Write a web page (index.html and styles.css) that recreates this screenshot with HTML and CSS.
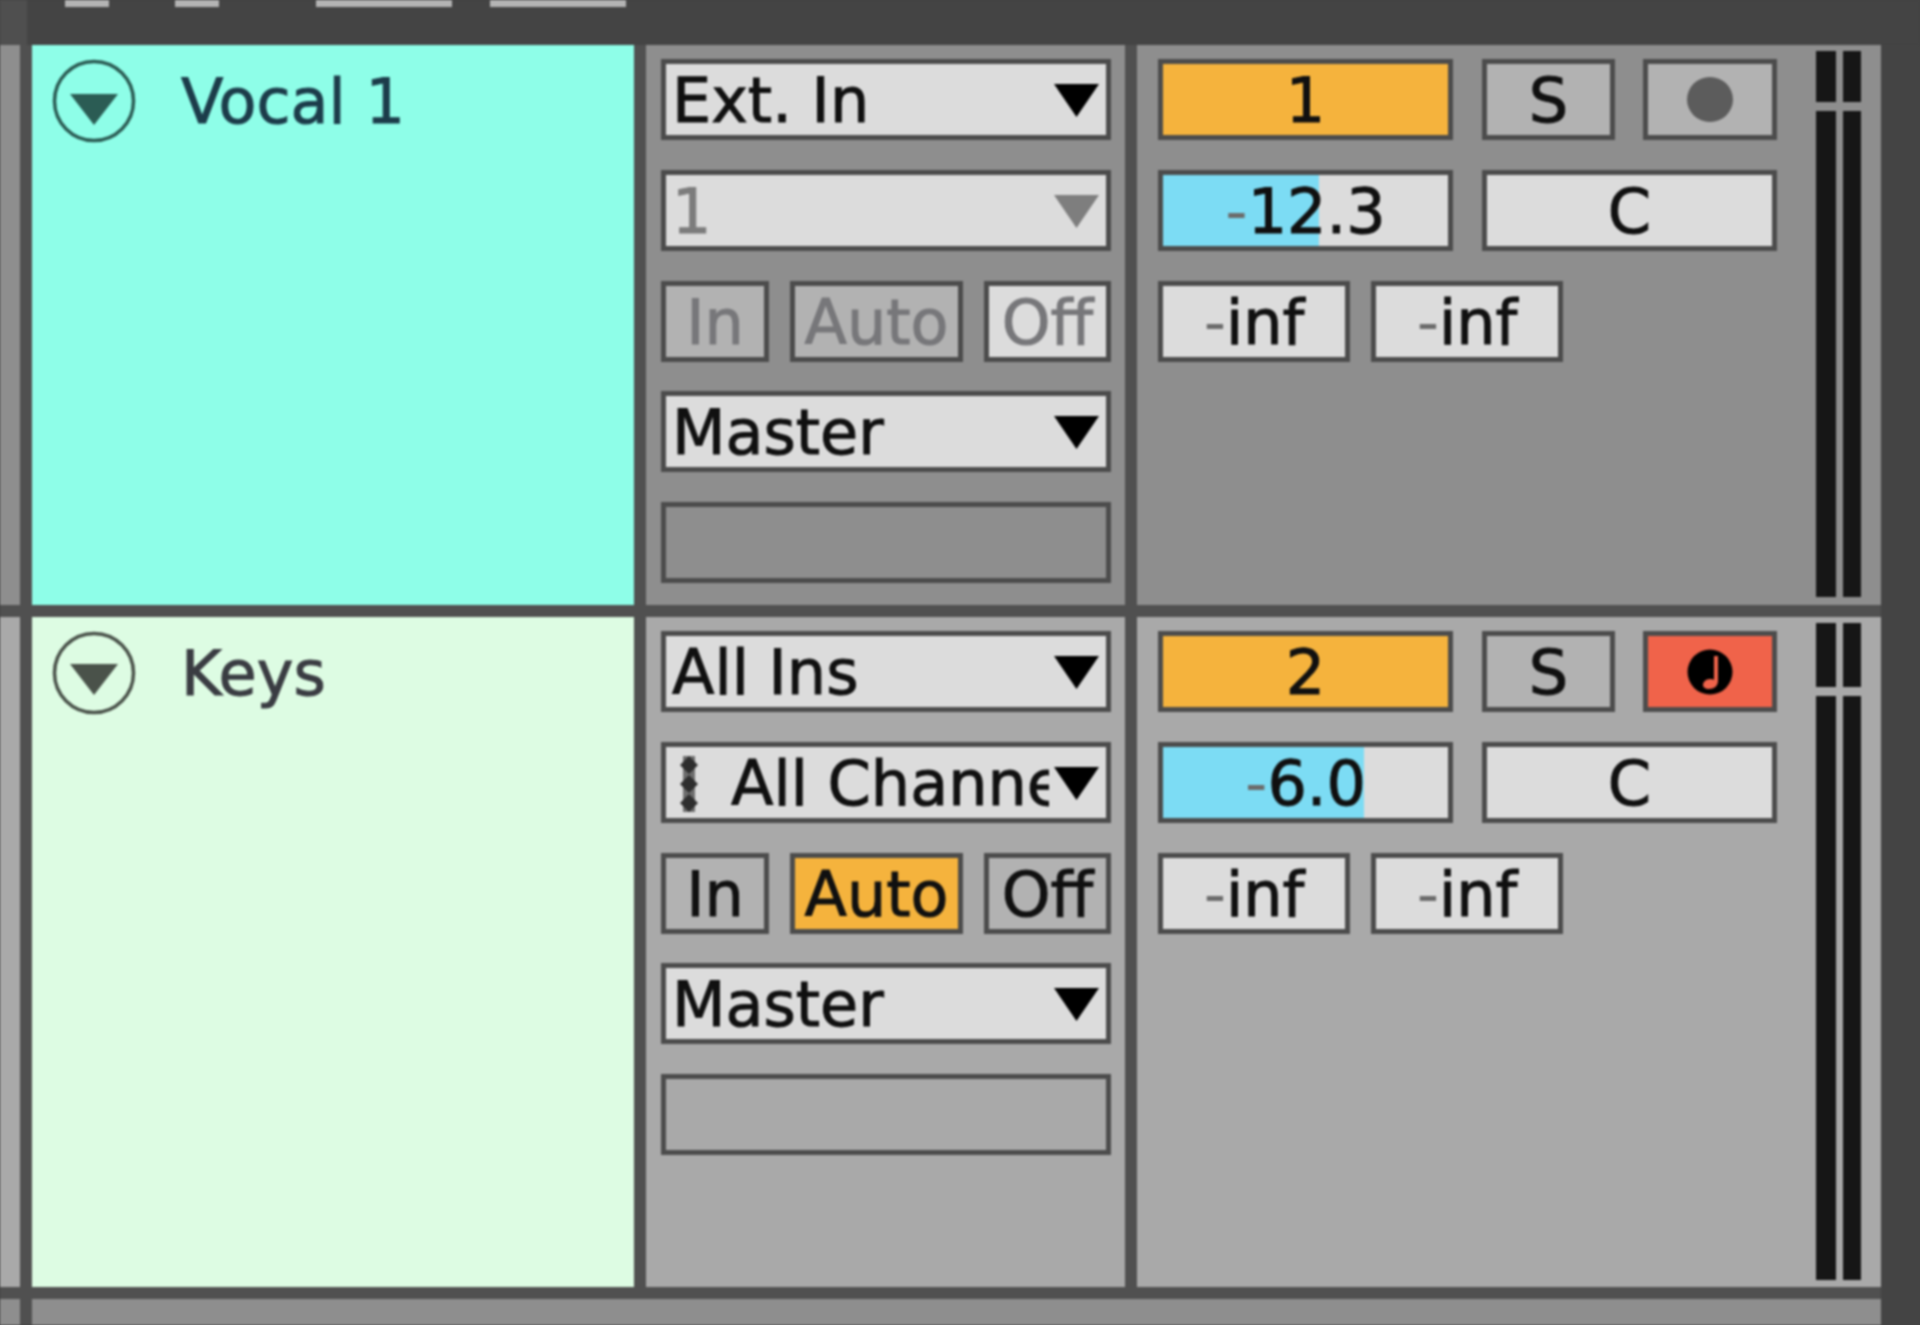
FILE: index.html
```html
<!DOCTYPE html>
<html lang="en">
<head>
    <meta charset="UTF-8">
    <title>Session tracks</title>
    <link rel="stylesheet" href="styles.css">
</head>
<body>
    <div class="session">
        <div class="topbar">
            <div class="tab tab-small"></div>
            <div class="tab tab-small tab-gap"></div>
            <div class="tab tab-wide"></div>
            <div class="tab tab-wide"></div>
        </div>

        <!-- track 1 -->
        <div class="track track-dark">
            <div class="sliver"></div>
            <div class="title title-cyan">
                <svg class="fold" viewBox="0 0 84 84"><circle cx="42" cy="42" r="39.500"></circle><path d="M18 35h48L42 66z"></path></svg>
                <span class="name">Vocal 1</span>
            </div>
            <div class="routing">
                <div class="box drop"><span class="label">Ext. In</span><svg class="arrow" viewBox="0 0 45 33"><path d="M0 0h45L22.500 33z"></path></svg></div>
                <div class="box drop off"><span class="label">1</span><svg class="arrow" viewBox="0 0 45 33"><path d="M0 0h45L22.500 33z"></path></svg></div>
                <div class="monitor off">
                    <div class="box btn-in grey">In</div>
                    <div class="box btn-auto grey">Auto</div>
                    <div class="box btn-off">Off</div>
                </div>
                <div class="box drop"><span class="label">Master</span><svg class="arrow" viewBox="0 0 45 33"><path d="M0 0h45L22.500 33z"></path></svg></div>
                <div class="box empty"></div>
            </div>
            <div class="mixer">
                <div class="controls">
                    <div class="line">
                        <div class="box num orange">1</div>
                        <div class="box solo grey">S</div>
                        <div class="box arm grey"><span class="dot"></span></div>
                    </div>
                    <div class="line">
                        <div class="box num vol" style="background-size: 54.7% 100%"><span class="minus">-</span>12.3</div>
                        <div class="box pan">C</div>
                    </div>
                    <div class="line line-sends">
                        <div class="box send"><span class="minus">-</span>inf</div>
                        <div class="box send"><span class="minus">-</span>inf</div>
                    </div>
                </div>
                <div class="meters">
                    <div class="meter"><div class="clip"></div><div class="bar"></div></div>
                    <div class="meter meter-r"><div class="clip"></div><div class="bar"></div></div>
                </div>
            </div>
        </div>

        <!-- track 2 -->
        <div class="track track-light">
            <div class="sliver"></div>
            <div class="title title-mint">
                <svg class="fold" viewBox="0 0 84 84"><circle cx="42" cy="42" r="39.500"></circle><path d="M18 33h48L42 64z"></path></svg>
                <span class="name">Keys</span>
            </div>
            <div class="routing">
                <div class="box drop"><span class="label">All Ins</span><svg class="arrow" viewBox="0 0 45 33"><path d="M0 0h45L22.500 33z"></path></svg></div>
                <div class="box drop">
                    <svg class="midi" viewBox="0 0 22 56"><rect x="5" y="0" width="12" height="56"></rect><path d="M11 0l9 9-9 9-9-9zM11 19l9 9-9 9-9-9zM11 38l9 9-9 9-9-9z"></path></svg>
                    <span class="label label-clip">All Channels</span><svg class="arrow" viewBox="0 0 45 33"><path d="M0 0h45L22.500 33z"></path></svg>
                </div>
                <div class="monitor">
                    <div class="box btn-in grey">In</div>
                    <div class="box btn-auto orange">Auto</div>
                    <div class="box btn-off grey">Off</div>
                </div>
                <div class="box drop"><span class="label">Master</span><svg class="arrow" viewBox="0 0 45 33"><path d="M0 0h45L22.500 33z"></path></svg></div>
                <div class="box empty"></div>
            </div>
            <div class="mixer">
                <div class="controls">
                    <div class="line">
                        <div class="box num orange">2</div>
                        <div class="box solo grey">S</div>
                        <div class="box arm red">
                            <svg class="note" viewBox="0 0 46 46"><circle cx="23" cy="23" r="22.500"></circle><path class="note-red" d="M27 7h4v25c0 5-4 8-9 8-4 0-6-2-6-4 0-3 3-6 7-6 2 0 3 0 4 1z"></path></svg>
                        </div>
                    </div>
                    <div class="line">
                        <div class="box num vol" style="background-size: 70.7% 100%"><span class="minus">-</span>6.0</div>
                        <div class="box pan">C</div>
                    </div>
                    <div class="line line-sends">
                        <div class="box send"><span class="minus">-</span>inf</div>
                        <div class="box send"><span class="minus">-</span>inf</div>
                    </div>
                </div>
                <div class="meters">
                    <div class="meter"><div class="clip"></div><div class="bar"></div></div>
                    <div class="meter meter-r"><div class="clip"></div><div class="bar"></div></div>
                </div>
            </div>
        </div>

        <div class="bottom">
            <div class="sliver"></div>
            <div class="bottom-fill"></div>
        </div>
    </div>
</body>
</html>
```

FILE: styles.css
```css
*{
    box-sizing: border-box;
    margin: 0;
}
body{
    background: #444444;
    font-family: "DejaVu Sans", sans-serif;
    font-size: 62px;
    line-height: 1;
    color: #101010;
    -webkit-text-stroke: 1px;
    overflow: hidden;
}
.session{
    width: 1920px;
    height: 1325px;
    display: flex;
    flex-direction: column;
    filter: blur(1.2px);
}

/* top strip with the cut off tabs */
.topbar{
    height: 45px;
    display: flex;
    align-items: flex-start;
    padding-left: 65px;
    background: linear-gradient(90deg, #4f4f4f 27px, #444444 27px);
}
.tab{
    height: 7px;
    background: #b4b4b4;
}
.tab-small{
    width: 44px;
    margin-right: 66px;
}
.tab-gap{
    margin-right: 97px;
}
.tab-wide{
    width: 136px;
    margin-right: 38px;
}

/* tracks */
.track{
    width: 1881px;
    display: flex;
    gap: 12px;
    background: #505050;
    border-bottom: 12px solid #505050;
}
.track-dark{
    height: 572px;
    --panel: #8e8e8e;
    --name: #1c3c4a;
    --fold: #2b5c54;
}
.track-light{
    height: 682px;
    --panel: #a9a9a9;
    --name: #3a3c42;
    --fold: #4a524a;
}
.sliver{
    width: 20px;
    background: var(--panel);
}
.title{
    width: 602px;
    display: flex;
    align-items: flex-start;
    padding: 14px 0 0 20px;
}
.title-cyan{
    background: #8efee8;
}
.title-mint{
    background: #ddfce3;
}
.fold{
    width: 84px;
    height: 84px;
    flex-shrink: 0;
}
.fold circle{
    fill: none;
    stroke: var(--fold);
    stroke-width: 3.500;
}
.fold path{
    fill: var(--fold);
}
.name{
    margin: 12px 0 0 45px;
    color: var(--name);
}

/* routing column */
.routing{
    width: 479px;
    background: var(--panel);
    padding: 14px 14px 0 15px;
    display: flex;
    flex-direction: column;
    gap: 29.75px;
}
.box{
    height: 81px;
    border: 5px solid #4c4c4c;
    background: #dcdcdc;
    display: flex;
    align-items: center;
    justify-content: center;
    white-space: nowrap;
    overflow: hidden;
    padding-top: 3px;
}
.grey{
    background: #b2b2b2;
}
.orange{
    background: #f5b33d;
}
.red{
    background: #f0634a;
}
.drop{
    justify-content: flex-start;
    padding: 3px 7px 0 6px;
}
.label{
    flex: 1;
}
.label-clip{
    overflow: hidden;
    margin-left: 31px;
}
.arrow{
    width: 45px;
    height: 33px;
    flex-shrink: 0;
    margin-left: 5px;
    margin-top: -1px;
}
.drop.off{
    color: #7c7c7c;
}
.arrow path{
    fill: #000000;
}
.drop.off .arrow path{
    fill: #7e7e7e;
}
.midi{
    width: 22px;
    height: 56px;
    flex-shrink: 0;
    margin-left: 6px;
    fill: #2e2e2e;
}
.midi rect{
    fill: #6e6e6e;
}
.monitor{
    display: flex;
    gap: 21px;
}
.monitor.off{
    color: #77777a;
}
.btn-in{
    width: 108px;
}
.btn-auto{
    width: 173px;
}
.btn-off{
    width: 127px;
}
.empty{
    background: transparent;
}

/* mixer column */
.mixer{
    width: 744px;
    background: var(--panel);
    display: flex;
    padding: 14px 20px 0 21px;
}
.controls{
    display: flex;
    flex-direction: column;
    gap: 29.75px;
}
.line{
    display: flex;
    gap: 29px;
}
.line-sends{
    gap: 21px;
}
.num{
    width: 295px;
}
.solo{
    width: 133px;
}
.arm{
    width: 134px;
    margin-left: -1px;
    padding-top: 0;
}
.dot{
    width: 46px;
    height: 45px;
    border-radius: 50%;
    background: #5c5c5c;
}
.note{
    width: 46px;
    height: 46px;
    fill: #000000;
}
.note .note-red{
    fill: #f0634a;
}
.vol{
    background: #dcdcdc linear-gradient(#7cdcf4, #7cdcf4) no-repeat;
}
.minus{
    color: #6c6c6c;
    -webkit-text-stroke: 0;
}
.pan{
    width: 295px;
}
.send{
    width: 192px;
}
.meters{
    margin-left: auto;
    display: flex;
    gap: 7px;
    margin-top: -8px;
    margin-bottom: 8px;
}
.track-light .meters{
    margin-bottom: 7px;
}
.meter{
    width: 20px;
    display: flex;
    flex-direction: column;
    gap: 9px;
}
.meter-r{
    width: 18px;
}
.clip{
    height: 51px;
    background: #161616;
}
.track-light .clip{
    height: 64px;
}
.bar{
    flex: 1;
    background: #161616;
}

/* empty area under the tracks */
.bottom{
    flex: 1;
    display: flex;
    gap: 12px;
    --panel: #8e8e8e;
    background: #505050;
    width: 1881px;
}
.bottom-fill{
    flex: 1;
    background: #8e8e8e;
}
```
